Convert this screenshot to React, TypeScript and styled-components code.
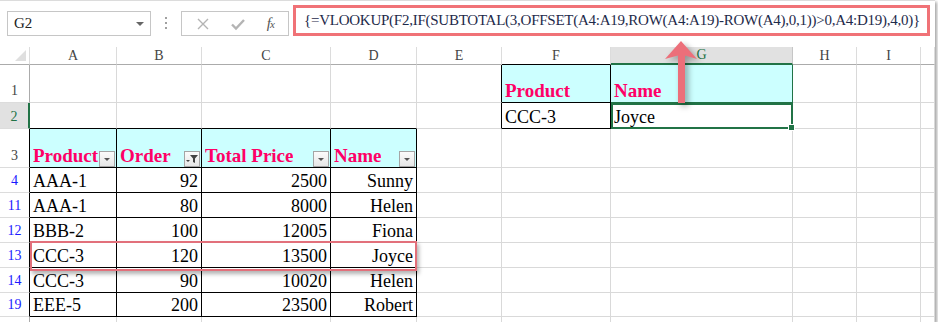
import styled, { createGlobalStyle } from "styled-components";

const GlobalStyle = createGlobalStyle`
  html, body {
    margin: 0;
    padding: 0;
    background: #ffffff;
  }
  body {
    font-family: "Liberation Serif", "Times New Roman", serif;
  }
`

const Frame = styled.div`
  position: relative;
  width: 935px;
  height: 322px;
  overflow: hidden;
  background: #ffffff;
  border-top: 1px solid #dcdcdc;
  box-sizing: border-box;
  box-shadow: 2px 2px 3px rgba(0, 0, 0, 0.35);
`

const FormulaBar = styled.div`
  display: flex;
  align-items: flex-start;
  height: 46px;
  padding: 4px 0 0 7px;
  box-sizing: border-box;
`

const NameBox = styled.div`
  margin-top: 6px;
  width: 144px;
  height: 25px;
  box-sizing: border-box;
  border: 1px solid #c6c6c6;
  display: flex;
  align-items: center;
  justify-content: space-between;
  padding: 0 6px 0 6px;
  font-size: 15px;
  color: #222;
`

const Caret = styled.span`
  width: 0;
  height: 0;
  border-left: 4px solid transparent;
  border-right: 4px solid transparent;
  border-top: 4px solid #666;
`

const Dots = styled.div`
  width: 30px;
  margin-top: 12px;
  display: flex;
  flex-direction: column;
  align-items: center;
  gap: 3px;

  & > span {
    width: 2px;
    height: 2px;
    background: #a0a0a0;
  }
`

const IconBox = styled.div`
  margin-top: 6px;
  width: 108px;
  height: 25px;
  box-sizing: border-box;
  border: 1px solid #c6c6c6;
  display: flex;
  align-items: center;
  justify-content: space-around;
  padding: 0 4px;
`

const Fx = styled.span`
  font-style: italic;
  font-size: 15px;
  color: #555;
  letter-spacing: -1px;

  & > small {
    font-size: 11px;
  }
`

const FormulaInput = styled.div`
  margin-left: 4px;
  width: 637px;
  height: 31px;
  box-sizing: border-box;
  border: 3px solid #f07277;
  display: flex;
  align-items: center;
  padding-left: 8px;
  font-size: 15px;
  letter-spacing: -0.25px;
  color: #1e2a4a;
  white-space: nowrap;
  overflow: hidden;
`

const Sheet = styled.div`
  display: grid;
  grid-template-columns: 30px 87px 85px 129px 86px 85px 109px 182px 64px 64px 1fr;
  grid-template-rows: 18px 38px 26px 39px 25px 25px 25px 25px 25px 24px 12px;
`

type CellProps = {
  $bg?: string
  $r?: string
  $b?: string
  $align?: "left" | "right" | "center"
  $color?: string
  $bold?: boolean
}

const Cell = styled.div<CellProps>`
  box-sizing: border-box;
  background: ${p => p.$bg || "#ffffff"};
  border-right: 1px solid ${p => p.$r || "#d9d9d9"};
  border-bottom: 1px solid ${p => p.$b || "#d9d9d9"};
  display: flex;
  align-items: flex-end;
  justify-content: ${p => p.$align === "right" ? "flex-end" : p.$align === "center" ? "center" : "flex-start"};
  padding: 0 3px 1px 3px;
  font-size: ${p => p.$bold ? "19px" : "18px"};
  line-height: 20px;
  color: ${p => p.$color || "#000"};
  font-weight: ${p => p.$bold ? 700 : 400};
  white-space: nowrap;
  overflow: hidden;
`

const ColHead = styled.div<{ $active?: boolean, $b?: string }>`
  box-sizing: border-box;
  background: ${p => p.$active ? "#e1e1e1" : "#ffffff"};
  border-right: 1px solid ${p => p.$active ? "#c6c6c6" : "#dcdcdc"};
  border-bottom: ${p => p.$active ? "2px solid #217346" : `1px solid ${p.$b || "#ababab"}`};
  display: flex;
  align-items: center;
  justify-content: center;
  font-size: 14px;
  color: ${p => p.$active ? "#217346" : "#444"};
`

const Corner = styled.div`
  position: relative;
  box-sizing: border-box;
  border-right: 1px solid #dcdcdc;
  border-bottom: 1px solid #ababab;

  &::after {
    content: "";
    position: absolute;
    right: 3px;
    bottom: 3px;
    width: 0;
    height: 0;
    border-left: 11px solid transparent;
    border-bottom: 11px solid #dfdfdf;
  }
`

const RowHead = styled.div<{ $active?: boolean, $filtered?: boolean, $edge?: string }>`
  box-sizing: border-box;
  background: ${p => p.$active ? "#e1e1e1" : "#ffffff"};
  border-right: ${p => p.$active ? "2px solid #217346" : `1px solid ${p.$edge || "#ababab"}`};
  border-bottom: 1px solid #dcdcdc;
  display: flex;
  align-items: flex-end;
  justify-content: center;
  padding-bottom: 3px;
  font-size: 14px;
  line-height: 16px;
  color: ${p => p.$active ? "#217346" : p.$filtered ? "#1a1aff" : "#444"};
`

const Selected = styled(Cell)`
  position: relative;
  overflow: visible;
  outline: 2px solid #217346;
  outline-offset: -2px;

  &::after {
    content: "";
    position: absolute;
    right: -3px;
    bottom: -3px;
    width: 5px;
    height: 5px;
    background: #217346;
    border: 1px solid #fff;
  }
`

const FilterButton = styled.span`
  flex: none;
  margin-left: auto;
  width: 16px;
  height: 16px;
  box-sizing: border-box;
  border: 1px solid #a5a5a5;
  background: linear-gradient(#fbfbfb, #e6e6e6);
  display: flex;
  align-items: center;
  justify-content: center;
  margin-right: -2px;
  margin-bottom: -1px;
`

const HeadText = styled.span`
  overflow: hidden;
`

const RowHighlight = styled.div`
  position: absolute;
  left: 30px;
  top: 240px;
  width: 387px;
  height: 30px;
  box-sizing: border-box;
  border: 2px solid #e2707b;
  box-shadow: 2px 3px 4px rgba(0, 0, 0, 0.3);
`

const Arrow = styled.svg`
  position: absolute;
  left: 660px;
  top: 36px;
  filter: drop-shadow(3px 3px 3px rgba(0, 0, 0, 0.35));
`

const PINK = "#ff0066"
const CYAN = "#ccffff"
const BLACK = "#000"

const rows = [
  { n: 4, p: "AAA-1", o: 92, t: 2500, name: "Sunny" },
  { n: 11, p: "AAA-1", o: 80, t: 8000, name: "Helen" },
  { n: 12, p: "BBB-2", o: 100, t: 12005, name: "Fiona" },
  { n: 13, p: "CCC-3", o: 120, t: 13500, name: "Joyce" },
  { n: 14, p: "CCC-3", o: 90, t: 10020, name: "Helen" },
  { n: 19, p: "EEE-5", o: 200, t: 23500, name: "Robert" },
]

const DropArrow = () => (
  <svg width="8" height="5" viewBox="0 0 8 5">
    <path d="M1 1h6L4 4z" fill="#555" />
  </svg>
)

const FunnelArrow = () => (
  <svg width="12" height="10" viewBox="0 0 12 10">
    <path d="M4 1h8L9 4.5V9L7 8V4.5z" fill="#444" />
    <path d="M0 6h4L2 8z" fill="#444" />
  </svg>
)

const EmptyRow = ({ below }: { below?: string }) => (
  <>
    <Cell $b={below} />
    <Cell $b={below} />
    <Cell $b={below} />
    <Cell $b={below} />
  </>
)

export default function App() {
  return (
    <Frame>
      <GlobalStyle />
      <FormulaBar>
        <NameBox>
          G2
          <Caret />
        </NameBox>
        <Dots>
          <span />
          <span />
          <span />
        </Dots>
        <IconBox>
          <svg width="14" height="14" viewBox="0 0 14 14">
            <path d="M2 2l10 10M12 2L2 12" stroke="#b4b4b4" strokeWidth="1.4" />
          </svg>
          <svg width="16" height="14" viewBox="0 0 16 14">
            <path d="M2 7.5l4 4L14 3" stroke="#b4b4b4" strokeWidth="2.4" fill="none" />
          </svg>
          <Fx>
            f<small>x</small>
          </Fx>
        </IconBox>
        <FormulaInput>
          {"{=VLOOKUP(F2,IF(SUBTOTAL(3,OFFSET(A4:A19,ROW(A4:A19)-ROW(A4),0,1))>0,A4:D19),4,0)}"}
        </FormulaInput>
      </FormulaBar>

      <Sheet>
        {/* column headers */}
        <Corner />
        <ColHead>A</ColHead>
        <ColHead>B</ColHead>
        <ColHead>C</ColHead>
        <ColHead>D</ColHead>
        <ColHead>E</ColHead>
        <ColHead $b={BLACK}>F</ColHead>
        <ColHead $active>G</ColHead>
        <ColHead>H</ColHead>
        <ColHead>I</ColHead>
        <ColHead />

        {/* row 1 */}
        <RowHead>1</RowHead>
        <EmptyRow />
        <Cell $r={BLACK} />
        <Cell $bg={CYAN} $r={BLACK} $b={BLACK} $color={PINK} $bold>Product</Cell>
        <Cell $bg={CYAN} $r="#217346" $b="#217346" $color={PINK} $bold>Name</Cell>
        <Cell />
        <Cell />
        <Cell />

        {/* row 2 */}
        <RowHead $active>2</RowHead>
        <EmptyRow below={BLACK} />
        <Cell $r={BLACK} />
        <Cell $r={BLACK} $b={BLACK}>CCC-3</Cell>
        <Selected>Joyce</Selected>
        <Cell />
        <Cell />
        <Cell />

        {/* row 3 - table header */}
        <RowHead $edge={BLACK}>3</RowHead>
        <Cell $bg={CYAN} $r={BLACK} $b={BLACK} $color={PINK} $bold>
          <HeadText>Product</HeadText>
          <FilterButton><DropArrow /></FilterButton>
        </Cell>
        <Cell $bg={CYAN} $r={BLACK} $b={BLACK} $color={PINK} $bold>
          <HeadText>Order</HeadText>
          <FilterButton><FunnelArrow /></FilterButton>
        </Cell>
        <Cell $bg={CYAN} $r={BLACK} $b={BLACK} $color={PINK} $bold>
          <HeadText>Total Price</HeadText>
          <FilterButton><DropArrow /></FilterButton>
        </Cell>
        <Cell $bg={CYAN} $r={BLACK} $b={BLACK} $color={PINK} $bold>
          <HeadText>Name</HeadText>
          <FilterButton><DropArrow /></FilterButton>
        </Cell>
        <Cell />
        <Cell />
        <Cell />
        <Cell />
        <Cell />
        <Cell />

        {rows.map(r => (
          <>
            <RowHead key={`h${r.n}`} $filtered $edge={BLACK}>{r.n}</RowHead>
            <Cell $r={BLACK} $b={BLACK}>{r.p}</Cell>
            <Cell $r={BLACK} $b={BLACK} $align="right">{r.o}</Cell>
            <Cell $r={BLACK} $b={BLACK} $align="right">{r.t}</Cell>
            <Cell $r={BLACK} $b={BLACK} $align="right">{r.name}</Cell>
            <Cell />
            <Cell />
            <Cell />
            <Cell />
            <Cell />
            <Cell />
          </>
        ))}

        {/* partially visible next row */}
        <RowHead />
        <Cell />
        <Cell />
        <Cell />
        <Cell />
        <Cell />
        <Cell />
        <Cell />
        <Cell />
        <Cell />
        <Cell />
      </Sheet>

      <RowHighlight />
      <Arrow width="44" height="72" viewBox="0 0 44 72">
        <path d="M21 4L37 22L25 18.5V66H18V18.5L5 22Z" fill="#ec6f7a" />
      </Arrow>
    </Frame>
  )
}
